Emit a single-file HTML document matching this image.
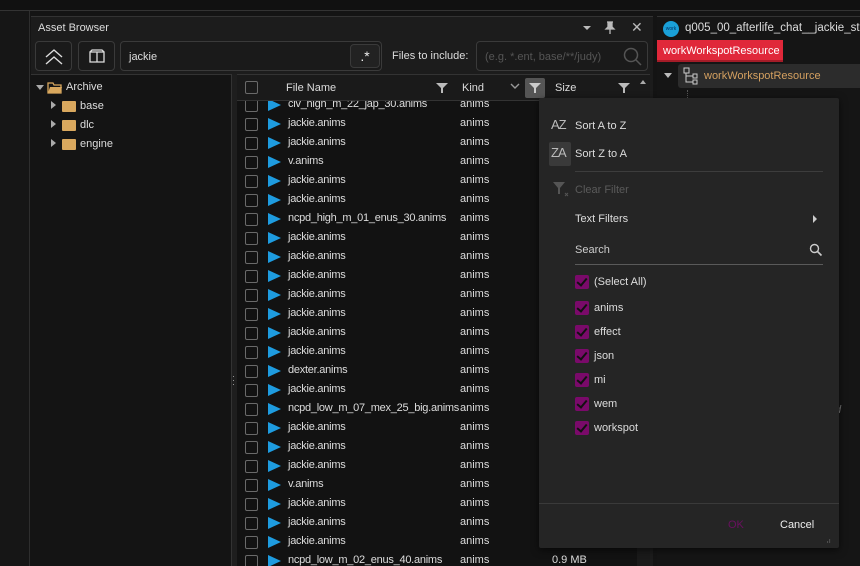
<!DOCTYPE html>
<html><head><style>
*{margin:0;padding:0;box-sizing:border-box}
body{width:860px;height:566px;overflow:hidden;background:#141414;font-family:"Liberation Sans",sans-serif;font-size:11px;color:#ddd;position:relative}
.abs{position:absolute}
.cb{position:absolute;width:13px;height:13px;border:1.5px solid #6a6a6a;border-radius:2px}
.tri{position:absolute;width:0;height:0;border-top:6px solid transparent;border-bottom:6px solid transparent;border-left:13px solid #1e9ce0}
.pc{position:absolute;width:14px;height:14px;background:#7a0a6a;border-radius:2px}
.pc:after{content:"";position:absolute;left:4px;top:1px;width:4px;height:8px;border:solid #111;border-width:0 2px 2px 0;transform:rotate(40deg)}
.btn{position:absolute;border:1px solid #3a3a3a;border-radius:4px;background:#1a1a1a}
.fn{letter-spacing:-0.25px;white-space:nowrap}
</style></head><body>
<div class="abs" style="left:0;top:0;width:860px;height:11px;background:#111;border-bottom:1px solid #333"></div>
<div class="abs" style="left:0;top:11px;width:30px;height:555px;background:#161616;border-right:1px solid #2e2e2e"></div>
<div class="abs" style="left:31px;top:16px;width:622px;height:550px;background:#1c1c1c;border-top:1px solid #333"></div>
<div class="abs" style="left:38px;top:22px;font-size:11px;color:#ddd">Asset Browser</div>
<div class="abs" style="left:583px;top:26px;border-left:4px solid transparent;border-right:4px solid transparent;border-top:4px solid #bbb"></div>
<svg class="abs" style="left:604px;top:21px" width="12" height="14"><path d="M3 1h6M4 1v5l-2 2h8L8 6V1M6 8v5" stroke="#bbb" stroke-width="1.3" fill="#bbb"/></svg>
<div class="abs" style="left:631px;top:19px;color:#bbb;font-size:14px">✕</div>
<div class="btn" style="left:35px;top:41px;width:37px;height:30px"><svg width="37" height="30"><path d="M10 15l8-7 8 7M10 22l8-7 8 7" stroke="#ddd" stroke-width="1.4" fill="none"/></svg></div>
<div class="btn" style="left:78px;top:41px;width:37px;height:30px"><svg width="37" height="30"><path d="M11 10h14v10H11zM18 10v10M11 10l2-2h10l2 2" stroke="#ddd" stroke-width="1.3" fill="none"/></svg></div>
<div class="btn" style="left:120px;top:41px;width:262px;height:30px"></div>
<div class="abs" style="left:129px;top:51px;color:#ddd">jackie</div>
<div class="btn" style="left:350px;top:44px;width:30px;height:24px;background:#222;color:#eee;text-align:center;font-size:14px;line-height:22px">.*</div>
<div class="abs" style="left:392px;top:50px;color:#ddd">Files to include:</div>
<div class="btn" style="left:476px;top:41px;width:172px;height:30px"></div>
<div class="abs" style="left:485px;top:51px;color:#555">(e.g. *.ent, base/**/judy)</div>
<svg class="abs" style="left:622px;top:46px" width="22" height="22"><circle cx="9" cy="9" r="6.5" stroke="#555" stroke-width="1.5" fill="none"/><path d="M14 14l5 5" stroke="#555" stroke-width="1.5"/></svg>
<div class="abs" style="left:31px;top:74px;width:200px;height:492px;background:#141414;border-top:1px solid #333"></div>
<div class="abs" style="left:231px;top:74px;width:6px;height:492px;background:#1e1e1e;border-left:1px solid #333"></div>
<div class="abs" style="left:232px;top:374px;color:#aaa;font-size:9px;line-height:4px">·<br>·<br>·</div>
<div class="abs" style="left:36px;top:85px;border-left:4px solid transparent;border-right:4px solid transparent;border-top:5px solid #aaa"></div>
<svg class="abs" style="left:47px;top:81px" width="16" height="13"><path d="M1 2h5l1 2h7v8H1z" fill="none" stroke="#d9a85e" stroke-width="1.3"/><path d="M3 6h12l-2 6H1z" fill="#d9a85e"/></svg>
<div class="abs" style="left:66px;top:81px">Archive</div>
<div class="abs" style="left:51px;top:101px;border-top:4px solid transparent;border-bottom:4px solid transparent;border-left:5px solid #aaa"></div>
<div class="abs" style="left:62px;top:101px;width:14px;height:11px;background:#d9a85e;border-radius:1px"></div>
<div class="abs" style="left:80px;top:100px">base</div>
<div class="abs" style="left:51px;top:120px;border-top:4px solid transparent;border-bottom:4px solid transparent;border-left:5px solid #aaa"></div>
<div class="abs" style="left:62px;top:120px;width:14px;height:11px;background:#d9a85e;border-radius:1px"></div>
<div class="abs" style="left:80px;top:119px">dlc</div>
<div class="abs" style="left:51px;top:139px;border-top:4px solid transparent;border-bottom:4px solid transparent;border-left:5px solid #aaa"></div>
<div class="abs" style="left:62px;top:139px;width:14px;height:11px;background:#d9a85e;border-radius:1px"></div>
<div class="abs" style="left:80px;top:138px">engine</div>
<div class="abs" style="left:237px;top:74px;width:413px;height:492px;background:#121212;border-top:1px solid #333"></div>
<div id="rows" class="abs" style="left:0;top:101px;width:637px;height:465px;overflow:hidden"></div>
<div class="abs" style="left:237px;top:75px;width:400px;height:26px;background:#1a1a1a;border-bottom:1px solid #333"></div>
<div class="cb" style="left:245px;top:81px"></div>
<div class="abs" style="left:286px;top:82px">File Name</div>
<svg class="abs" style="left:436px;top:82px" width="12" height="12"><path d="M0 1h12L7 6v5H5V6z" fill="#bbb"/></svg>
<div class="abs" style="left:462px;top:82px">Kind</div>
<svg class="abs" style="left:510px;top:83px" width="10" height="8"><path d="M1 1l4 4 4-4" stroke="#999" stroke-width="1.4" fill="none"/></svg>
<div class="abs" style="left:525px;top:78px;width:20px;height:20px;background:#555;border-radius:2px"></div>
<svg class="abs" style="left:529px;top:82px" width="12" height="12"><path d="M0 1h12L7 6v5H5V6z" fill="#ccc"/></svg>
<div class="abs" style="left:555px;top:82px">Size</div>
<svg class="abs" style="left:618px;top:82px" width="12" height="12"><path d="M0 1h12L7 6v5H5V6z" fill="#bbb"/></svg>
<div class="abs" style="left:637px;top:75px;width:13px;height:491px;background:#1a1a1a"></div>
<div class="abs" style="left:640px;top:80px;border-left:3px solid transparent;border-right:3px solid transparent;border-bottom:4px solid #aaa"></div>
<div class="abs" style="left:653px;top:11px;width:4px;height:555px;background:#141414"></div>
<div class="abs" style="left:657px;top:16px;width:203px;height:550px;background:#151515;border-top:1px solid #333"></div>
<div class="abs" style="left:663px;top:21px;width:16px;height:16px;border-radius:50%;background:#1aa0d8;font-size:5px;color:#036;text-align:center;line-height:16px">work</div>
<div class="abs" style="left:685px;top:22px;font-size:11.5px;white-space:nowrap">q005_00_afterlife_chat__jackie_stand</div>
<div class="abs" style="left:657px;top:40px;width:126px;height:22px;background:#e0283a;border-bottom:2px solid #a51c28;color:#fff;padding:5px 0 0 6px">workWorkspotResource</div>
<div class="abs" style="left:664px;top:73px;border-left:4px solid transparent;border-right:4px solid transparent;border-top:5px solid #bbb"></div>
<div class="abs" style="left:678px;top:64px;width:182px;height:24px;background:#2c2c2c;border-radius:3px 0 0 3px"></div>
<svg class="abs" style="left:683px;top:67px" width="16" height="18"><rect x="1" y="1" width="5" height="5" fill="none" stroke="#ccc"/><rect x="10" y="7" width="4" height="4" fill="none" stroke="#ccc"/><rect x="10" y="13" width="4" height="4" fill="none" stroke="#ccc"/><path d="M3 6v9h7M3 9h7" stroke="#ccc" fill="none"/></svg>
<div class="abs" style="left:704px;top:70px;color:#d4a060">workWorkspotResource</div>
<div class="abs" style="left:687px;top:90px;width:1px;height:10px;border-left:1px dotted #555"></div>
<div class="abs" style="left:835px;top:404px;color:#777;font-style:italic">d</div>
<div class="abs" style="left:539px;top:98px;width:300px;height:450px;background:#252525;border-radius:2px;box-shadow:0 2px 8px rgba(0,0,0,.6)"></div>
<div class="abs" style="left:551px;top:117px;color:#bbb;font-size:13px;letter-spacing:-1px">AZ</div>
<div class="abs" style="left:575px;top:120px">Sort A to Z</div>
<div class="abs" style="left:549px;top:142px;width:22px;height:24px;background:#3a3a3a;border-radius:2px"></div>
<div class="abs" style="left:551px;top:145px;color:#bbb;font-size:13px;letter-spacing:-1px">ZA</div>
<div class="abs" style="left:575px;top:148px">Sort Z to A</div>
<div class="abs" style="left:575px;top:171px;width:248px;height:1px;background:#3d3d3d"></div>
<svg class="abs" style="left:553px;top:181px" width="16" height="16"><path d="M0 1h12L7 7v6H5V7z" fill="#555"/><path d="M12 12l3 3M15 12l-3 3" stroke="#555"/></svg>
<div class="abs" style="left:575px;top:184px;color:#5a5a5a">Clear Filter</div>
<div class="abs" style="left:575px;top:213px">Text Filters</div>
<div class="abs" style="left:813px;top:215px;border-top:4px solid transparent;border-bottom:4px solid transparent;border-left:4px solid #ccc"></div>
<div class="abs" style="left:575px;top:244px;color:#ccc">Search</div>
<svg class="abs" style="left:809px;top:243px" width="14" height="14"><circle cx="5.5" cy="5.5" r="4" stroke="#ccc" stroke-width="1.4" fill="none"/><path d="M8.5 8.5l4 4" stroke="#ccc" stroke-width="1.6"/></svg>
<div class="abs" style="left:575px;top:264px;width:248px;height:1px;background:#5a5a5a"></div>
<div class="pc" style="left:575px;top:275px"></div><div class="abs" style="left:594px;top:276px">(Select All)</div>
<div class="pc" style="left:575px;top:301px"></div><div class="abs" style="left:594px;top:302px">anims</div>
<div class="pc" style="left:575px;top:325px"></div><div class="abs" style="left:594px;top:326px">effect</div>
<div class="pc" style="left:575px;top:349px"></div><div class="abs" style="left:594px;top:350px">json</div>
<div class="pc" style="left:575px;top:373px"></div><div class="abs" style="left:594px;top:374px">mi</div>
<div class="pc" style="left:575px;top:397px"></div><div class="abs" style="left:594px;top:398px">wem</div>
<div class="pc" style="left:575px;top:421px"></div><div class="abs" style="left:594px;top:422px">workspot</div>
<div class="abs" style="left:539px;top:503px;width:300px;height:1px;background:#3a3a3a"></div>
<div class="abs" style="left:728px;top:519px;color:#6a1060">OK</div>
<div class="abs" style="left:780px;top:519px;color:#eee">Cancel</div>
<div class="abs" style="left:826px;top:535px;color:#777;font-size:7px">⣠</div>
<script>
var n=["civ_high_m_22_jap_30.anims","jackie.anims","jackie.anims","v.anims","jackie.anims","jackie.anims","ncpd_high_m_01_enus_30.anims","jackie.anims","jackie.anims","jackie.anims","jackie.anims","jackie.anims","jackie.anims","jackie.anims","dexter.anims","jackie.anims","ncpd_low_m_07_mex_25_big.anims","jackie.anims","jackie.anims","jackie.anims","v.anims","jackie.anims","jackie.anims","jackie.anims","ncpd_low_m_02_enus_40.anims"];
var h="";for(var i=0;i<n.length;i++){var y=19*i-2;
h+='<div class="cb" style="left:245px;top:'+y+'px"></div><div class="tri" style="left:268px;top:'+y+'px"></div><div class="abs fn" style="left:288px;top:'+(y-1)+'px">'+n[i]+'</div><div class="abs" style="left:460px;top:'+(y-1)+'px">anims</div>';}
h+='<div class="abs" style="left:552px;top:'+(19*24-3)+'px">0.9 MB</div>';
document.getElementById("rows").innerHTML=h;
</script>
</body></html>
